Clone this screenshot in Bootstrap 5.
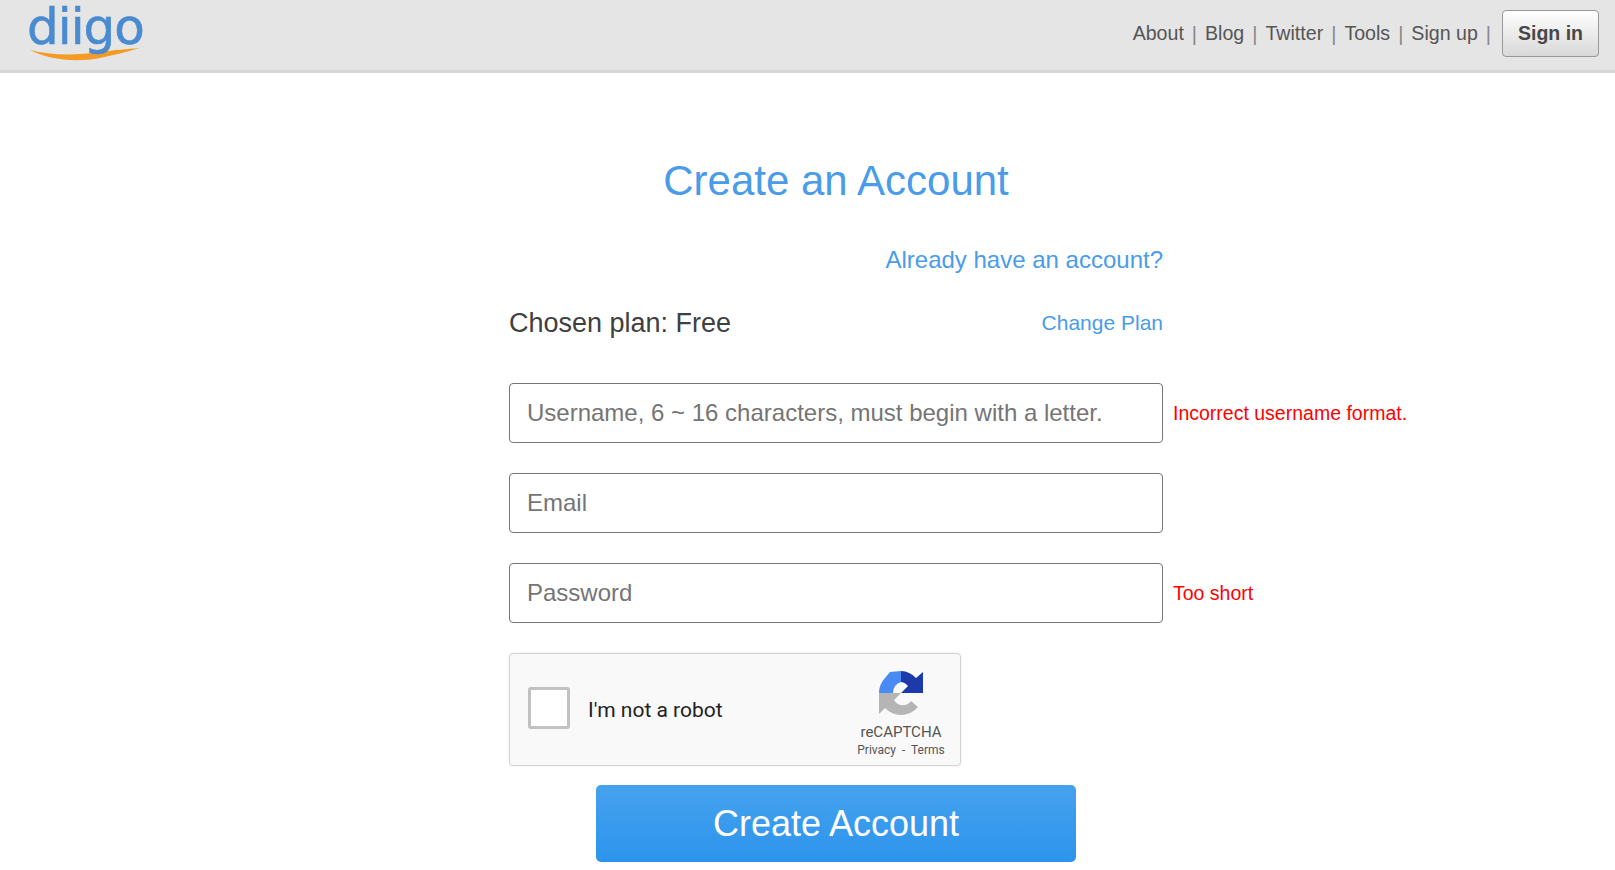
<!DOCTYPE html>
<html lang="en">
<head>
  <meta charset="UTF-8" />
  <title>Diigo - Create an Account</title>
  <link href="https://cdn.jsdelivr.net/npm/bootstrap@5.3.0/dist/css/bootstrap.min.css" rel="stylesheet">
  <style>
    body {
      font-family: "Liberation Sans", Arial, sans-serif;
      color: #444;
      background: #fff;
    }
    .top-bar {
      height: 73px;
      background: #e5e5e5;
      border-bottom: 3px solid #d6d6d6;
      padding: 0 16px 0 29px;
    }
    .logo-box {
      position: relative;
      width: 116px;
      height: 70px;
    }
    .logo-word {
      position: absolute;
      left: -2px;
      top: -3px;
      font-family: "DejaVu Sans", sans-serif;
      font-size: 50px;
      line-height: 60px;
      letter-spacing: -1px;
      color: #4a8bd0;
      -webkit-text-stroke: .6px #4a8bd0;
    }
    .logo-swoosh {
      position: absolute;
      left: 0;
      top: 44px;
    }
    .top-nav {
      margin-bottom: 4px;
    }
    .top-link {
      font-size: 19.6px;
      color: #555;
      text-decoration: none;
      padding-top: 2px;
    }
    .top-sep {
      font-size: 20px;
      color: #888;
      margin: 0 8px;
      padding-top: 2px;
    }
    .signin-btn {
      width: 97px;
      height: 47px;
      margin-left: 3px;
      font-size: 19.5px;
      font-weight: 700;
      color: #484848;
      border: 1px solid #999;
      border-radius: 4px;
      background: linear-gradient(#fff, #d8d8d8);
      padding: 1px 0 0;
    }
    .form-box {
      width: 654px;
      margin-left: 509px;
    }
    .page-title {
      font-size: 42px;
      font-weight: 400;
      line-height: 48px;
      color: #4a9ce8;
      text-align: center;
      margin: 84px 0 0;
    }
    .blue-link {
      color: #4a9ce8;
      text-decoration: none;
    }
    .have-account {
      font-size: 24px;
      line-height: 28px;
      margin-top: 41px;
    }
    .plan-row {
      margin-top: 31px;
      height: 36px;
    }
    .plan-text {
      font-size: 27px;
      color: #404040;
    }
    .plan-link {
      font-size: 21px;
    }
    .field-row {
      position: relative;
      margin-top: 30px;
    }
    .plan-row + form .field-row:first-child {
      margin-top: 42px;
    }
    .field-input.form-control {
      height: 60px;
      border: 1px solid #767676;
      border-radius: 4px;
      padding: 0 17px;
      font-size: 24px;
      color: #333;
    }
    .field-input.form-control::placeholder {
      color: #757575;
      opacity: 1;
    }
    .field-error {
      position: absolute;
      left: 664px;
      top: 0;
      line-height: 60px;
      font-size: 19.5px;
      color: #f00;
      white-space: nowrap;
    }
    .captcha-box {
      width: 452px;
      height: 113px;
      margin-top: 30px;
      background: #f9f9f9;
      border: 1px solid #d3d3d3;
      border-radius: 4px;
      box-shadow: 0 0 3px rgba(0, 0, 0, .08);
      font-family: Roboto, sans-serif;
      padding: 0 16px 0 18px;
    }
    .captcha-check {
      width: 42px;
      height: 42px;
      background: #fff;
      border: 3px solid #c1c1c1;
      border-radius: 3px;
      margin-top: -3px;
    }
    .captcha-label {
      font-size: 21px;
      color: #222;
      margin-left: 18px;
      margin-top: 2px;
    }
    .captcha-brand {
      width: 86px;
      margin-top: 17px;
      text-align: center;
      color: #555;
    }
    .captcha-logo {
      margin-bottom: 7px;
    }
    .captcha-name {
      font-size: 15px;
      line-height: 18px;
    }
    .captcha-terms {
      font-size: 12px;
      line-height: 16px;
      margin-top: 1px;
      margin-left: -2px;
      margin-right: -2px;
      white-space: nowrap;
    }
    .create-btn {
      display: block;
      width: 480px;
      height: 77px;
      margin: 19px auto 0;
      padding: 0;
      font-size: 36px;
      color: #fff;
      border: 0;
      border-radius: 5px;
      background: linear-gradient(#46a2ee, #2c94ec);
    }
  </style>
</head>
<body>
  <header class="top-bar d-flex align-items-center justify-content-between">
    <a href="#" class="logo-box d-block text-decoration-none">
      <svg class="logo-swoosh" width="112" height="18" viewBox="0 0 112 18">
        <path d="M1 6 C20 11 45 12 71 8 C86 6 98 5 111 4 C98 8 84 11 71 14 C45 19 18 15 1 6 Z" fill="#f59a23"/>
      </svg>
      <span class="logo-word">diigo</span>
    </a>
    <nav class="top-nav d-flex align-items-center">
      <a href="#" class="top-link">About</a><span class="top-sep">|</span>
      <a href="#" class="top-link">Blog</a><span class="top-sep">|</span>
      <a href="#" class="top-link">Twitter</a><span class="top-sep">|</span>
      <a href="#" class="top-link">Tools</a><span class="top-sep">|</span>
      <a href="#" class="top-link">Sign up</a><span class="top-sep">|</span>
      <button type="button" class="btn signin-btn">Sign in</button>
    </nav>
  </header>

  <main class="form-box">
    <h1 class="page-title">Create an Account</h1>
    <div class="have-account text-end"><a href="#" class="blue-link">Already have an account?</a></div>
    <div class="plan-row d-flex align-items-center justify-content-between">
      <span class="plan-text">Chosen plan: Free</span>
      <a href="#" class="blue-link plan-link">Change Plan</a>
    </div>
    <form>
      <div class="field-row">
        <input type="text" class="form-control field-input" placeholder="Username, 6 ~ 16 characters, must begin with a letter.">
        <span class="field-error">Incorrect username format.</span>
      </div>
      <div class="field-row">
        <input type="text" class="form-control field-input" placeholder="Email">
      </div>
      <div class="field-row">
        <input type="password" class="form-control field-input" placeholder="Password">
        <span class="field-error">Too short</span>
      </div>
      <div class="captcha-box d-flex justify-content-between">
        <div class="d-flex align-items-center">
          <div class="captcha-check"></div>
          <span class="captcha-label">I'm not a robot</span>
        </div>
        <div class="captcha-brand">
          <svg width="44" height="45" viewBox="0 0 44 45" class="captcha-logo d-block mx-auto">
            <path d="M11 1 L22 0 L22 11 A11 11 0 0 0 14 22 L0 22 A22 22 0 0 1 6 7 Z" fill="#4a8af4"/>
            <path d="M22 0 A22 22 0 0 1 37 7 L44 1 L44 22 L22 22 L29 15 A10 10 0 0 0 22 11 Z" fill="#1c3aa9"/>
            <path d="M0 22 L22 22 L15 29 A10 10 0 0 0 32 30 L39 36 A22 22 0 0 1 6 37 L0 43 Z" fill="#b5b5b5"/>
          </svg>
          <div class="captcha-name">reCAPTCHA</div>
          <div class="captcha-terms">Privacy &nbsp;-&nbsp; Terms</div>
        </div>
      </div>
      <button type="button" class="create-btn">Create Account</button>
    </form>
  </main>
</body>
</html>
